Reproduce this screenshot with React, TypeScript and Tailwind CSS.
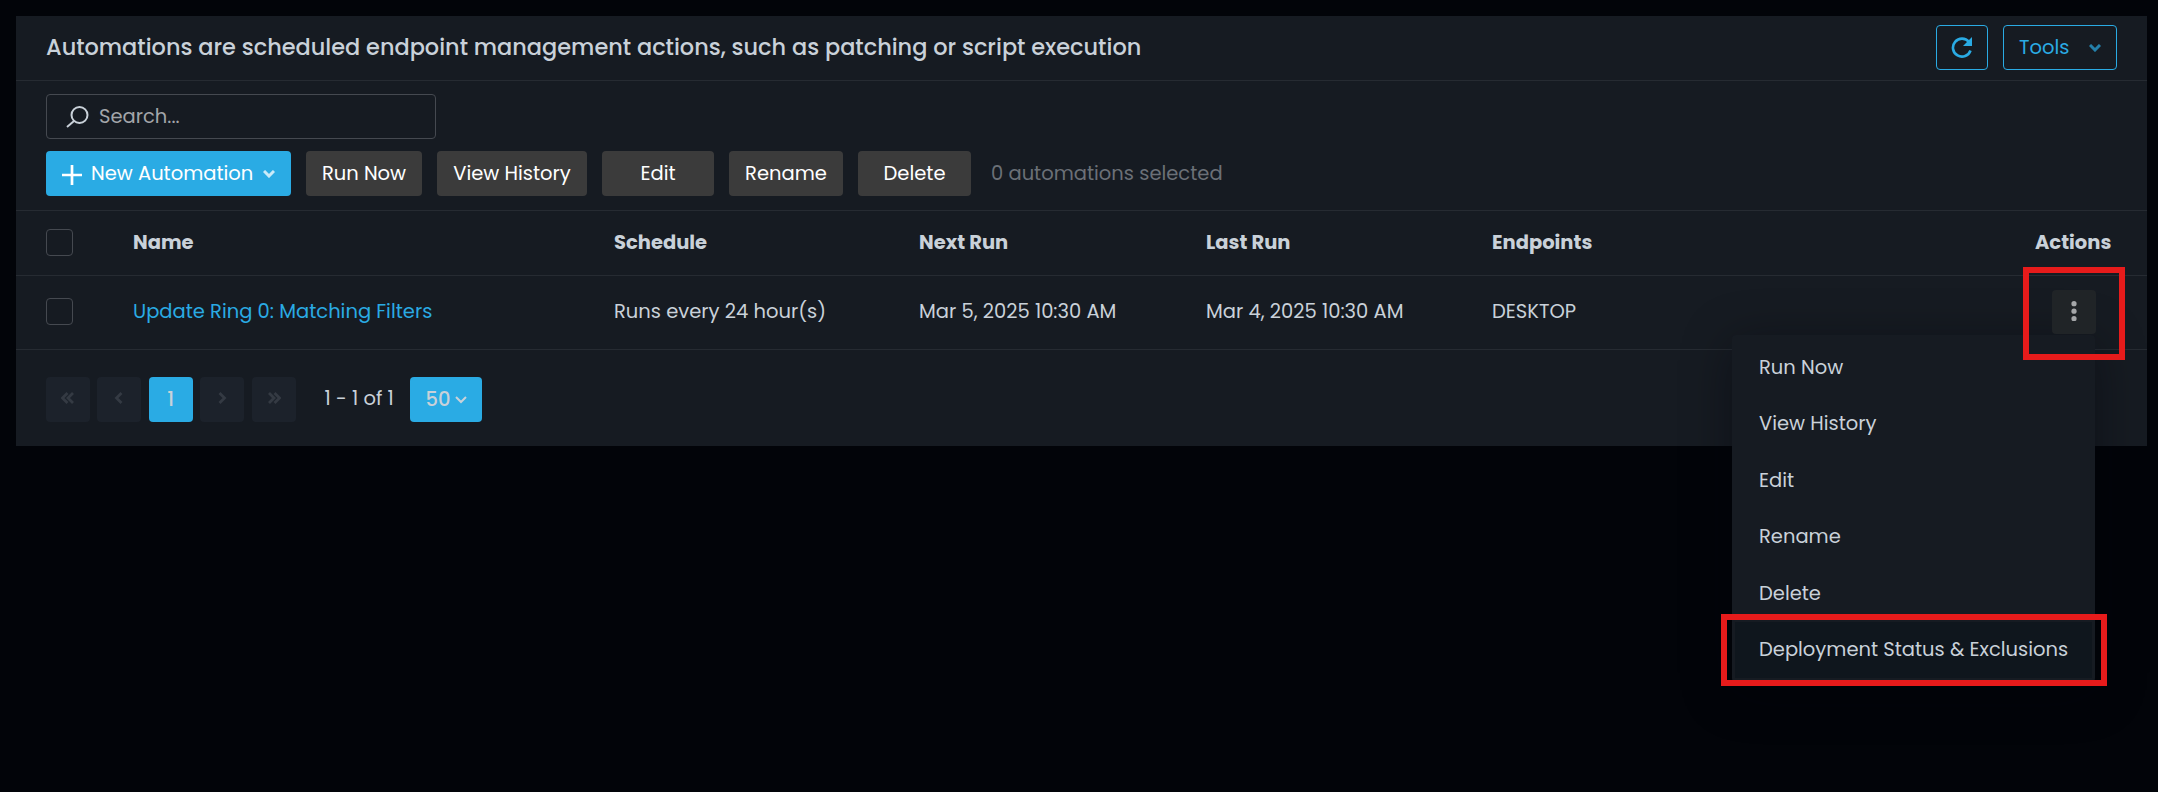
import type { ReactNode } from 'react';
import { clsx } from 'clsx';

const MENU_ITEMS = ['Run Now', 'View History', 'Edit', 'Rename', 'Delete', 'Deployment Status & Exclusions'];

const ROW_GRID = 'grid grid-cols-[87px_481px_305px_287px_286px_543px_1fr] items-center pl-[30px]';

export default function App() {
  return (
    <div className="relative h-[792px] w-[2158px] overflow-hidden bg-[#020409] p-4 font-[Poppins,Inter,sans-serif] text-[19.5px] leading-[30px] text-[#c9d1d9]">
      <main className="h-[430px] w-[2131px] bg-[#161b22]">
        <header className="flex h-[65px] items-center justify-between border-b border-[#262b32] px-[30px] pb-px">
          <h1 className="-mt-px text-[22.43px] font-medium whitespace-nowrap">
            Automations are scheduled endpoint management actions, such as patching or script execution
          </h1>
          <div className="-mt-px flex gap-[15px] text-[#2aabe4]">
            <button type="button" aria-label="Refresh" className="grid h-[45px] w-[52px] place-items-center rounded border border-[#2aabe4] pt-px">
              <RefreshIcon />
            </button>
            <button type="button" className="flex h-[45px] w-[114px] items-center justify-between rounded border border-[#2aabe4] px-[15px] pt-px">
              Tools
              <Chevron className="w-3 stroke-3 opacity-70" />
            </button>
          </div>
        </header>

        <section className="h-[130px] border-b border-[#262b32] px-[30px] pt-[13px]">
          <label className="flex h-[45px] w-[390px] items-center gap-[10px] rounded border border-[#454950] pl-[19px]">
            <SearchIcon />
            <span className="text-[#a3a6aa]">Search...</span>
          </label>
          <div className="mt-3 flex items-center gap-[15px] text-white">
            <button type="button" className="flex h-[45px] w-[245px] items-center rounded bg-[#2aabe4] pl-4 whitespace-nowrap">
              <svg viewBox="0 0 20 20" className="mt-0.5 mr-[9px] size-5 shrink-0" stroke="currentColor" strokeWidth="2.7">
                <path d="M10 0v20M0 10h20" />
              </svg>
              New Automation
              <Chevron className="ml-[10px] w-3 stroke-3 opacity-75" />
            </button>
            <ToolbarButton className="w-[116px]">Run Now</ToolbarButton>
            <ToolbarButton className="w-[150px]">View History</ToolbarButton>
            <ToolbarButton className="w-[112px]">Edit</ToolbarButton>
            <ToolbarButton className="w-[114px]">Rename</ToolbarButton>
            <ToolbarButton className="w-[113px]">Delete</ToolbarButton>
            <span className="ml-[5px] text-[#6b7077]">0 automations selected</span>
          </div>
        </section>

        <div className={clsx(ROW_GRID, 'h-[65px] border-b border-[#262b32] font-bold')}>
          <Checkbox />
          <span>Name</span>
          <span>Schedule</span>
          <span>Next Run</span>
          <span>Last Run</span>
          <span>Endpoints</span>
          <span>Actions</span>
        </div>
        <div className={clsx(ROW_GRID, 'h-[74px] border-b border-[#262b32] pb-0.5')}>
          <Checkbox />
          <span className="text-[#2aabe4]">Update Ring 0: Matching Filters</span>
          <span>Runs every 24 hour(s)</span>
          <span>Mar 5, 2025 10:30 AM</span>
          <span>Mar 4, 2025 10:30 AM</span>
          <span>DESKTOP</span>
        </div>

        <footer className="flex items-center pt-[27px] pl-[30px]">
          <div className="flex gap-[7.4px]">
            <PageButton label="First page">
              <Arrows d="M6.5 1 1.5 6l5 5M12 1 7 6l5 5" />
            </PageButton>
            <PageButton label="Previous page">
              <Arrows d="M9.5 1 4.5 6l5 5" />
            </PageButton>
            <PageButton active>1</PageButton>
            <PageButton label="Next page">
              <Arrows d="m4.5 1 5 5-5 5" />
            </PageButton>
            <PageButton label="Last page">
              <Arrows d="m2 1 5 5-5 5M7.5 1l5 5-5 5" />
            </PageButton>
          </div>
          <span className="-mt-px ml-[29px] w-[85px]">1 - 1 of 1</span>
          <button type="button" className="flex h-[45px] w-[72px] items-center gap-1 rounded bg-[#2aabe4] pl-4 font-medium">
            50
            <Chevron className="w-3 stroke-2" />
          </button>
        </footer>
      </main>

      <div className="absolute top-[335px] left-[1732px] w-[363px] rounded bg-[#161b22] px-[3px] pt-1 pb-1 shadow-[0_8px_50px_rgba(1,4,9,0.4)]">
        {MENU_ITEMS.map((item, i) => (
          <div key={item} className={clsx('flex h-[56.5px] items-center pt-px pl-6 whitespace-nowrap', i === 5 && 'bg-[#0f161d]')}>
            {item}
          </div>
        ))}
      </div>
      <button type="button" aria-label="Row actions" className="absolute top-[290px] left-[2052px] grid size-11 place-items-center rounded bg-[#202427] text-[#a5a7a9]">
        <svg viewBox="0 0 6 20" className="mb-[3px] h-5 w-1.5" fill="currentColor">
          <circle cx="3" cy="2.7" r="2.6" />
          <circle cx="3" cy="10.2" r="2.6" />
          <circle cx="3" cy="17.7" r="2.6" />
        </svg>
      </button>
      <div className="absolute top-[267px] left-[2023px] h-[93px] w-[102px] border-6 border-[#e71b1b]" />
      <div className="absolute top-[614px] left-[1721px] h-[72px] w-[386px] border-6 border-[#e71b1b]" />
    </div>
  );
}

function ToolbarButton({ className, children }: { className: string; children: ReactNode }) {
  return (
    <button type="button" className={clsx('h-[45px] rounded bg-[#3b3b3b] whitespace-nowrap', className)}>
      {children}
    </button>
  );
}

function PageButton({ active, label, children }: { active?: boolean; label?: string; children: ReactNode }) {
  return (
    <button
      type="button"
      aria-label={label}
      className={clsx('grid h-[45px] w-11 place-items-center rounded font-medium', active ? 'bg-[#2aabe4]' : 'bg-[#1c222b] text-[#343a43]')}
    >
      {children}
    </button>
  );
}

function Arrows({ d }: { d: string }) {
  return (
    <svg viewBox="0 0 14 12" className="mb-1 h-3 w-3.5" fill="none" stroke="currentColor" strokeWidth="2.8">
      <path d={d} />
    </svg>
  );
}

function Checkbox() {
  return <span className="-mt-px block size-[27px] rounded border border-[#454950]" />;
}

function Chevron({ className }: { className: string }) {
  return (
    <svg viewBox="0 0 12 8" className={className} fill="none" stroke="currentColor">
      <path d="m1 1 5 5 5-5" />
    </svg>
  );
}

function SearchIcon() {
  return (
    <svg viewBox="0 0 23 22" className="h-[22px] w-[23px]" fill="none" stroke="currentColor" strokeWidth="2">
      <circle cx="13.5" cy="9" r="8" />
      <path d="M8 15 1 21" />
    </svg>
  );
}

function RefreshIcon() {
  return (
    <svg viewBox="0 0 22 22" className="size-[22px]" fill="none" stroke="currentColor" strokeWidth="2.6">
      <path d="M19.5 13.5A9 9 0 1 1 18 5" />
      <path d="M21 0v9h-9z" fill="currentColor" stroke="none" />
    </svg>
  );
}
